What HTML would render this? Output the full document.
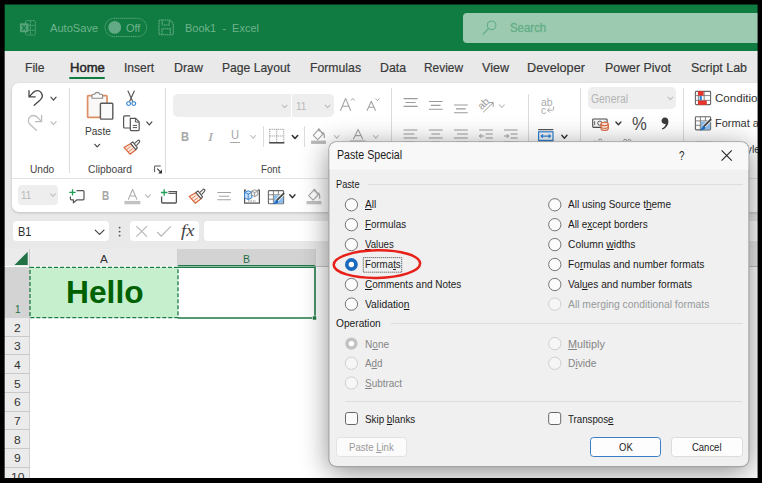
<!DOCTYPE html>
<html><head><meta charset="utf-8"><title>Excel - Paste Special</title>
<style>
html,body{margin:0;padding:0;background:#000;}
body{width:762px;height:483px;position:relative;overflow:hidden;font-family:"Liberation Sans",sans-serif;}
.r{position:absolute;box-sizing:border-box;}
.t{position:absolute;white-space:pre;transform-origin:0 50%;display:block;}
.t u{text-decoration:underline;text-decoration-thickness:1px;text-underline-offset:1px;}
svg.ov{position:absolute;left:0;top:0;}
</style></head><body>
<div class="r" style="left:4px;top:4px;width:754px;height:475px;background:#e9e9e9;"></div>
<div class="r" style="left:4px;top:4px;width:754px;height:46.5px;background:#107c41;"></div>
<div class="r" style="left:463px;top:12.5px;width:295px;height:30.0px;background:#9ccab1;border-radius:4px 0 0 4px;"></div>
<span class="t" style="left:50.30px;top:21.45px;font-size:11.75px;line-height:14.10px;color:#6fb38d;transform:scaleX(0.9460);">AutoSave</span>
<span class="t" style="left:126.00px;top:21.73px;font-size:11.28px;line-height:13.54px;color:#6fb38d;transform:scaleX(0.9717);">Off</span>
<span class="t" style="left:185.00px;top:21.45px;font-size:11.75px;line-height:14.10px;color:#6fb38d;transform:scaleX(0.9365);">Book1  -  Excel</span>
<span class="t" style="left:509.80px;top:21.47px;font-size:12.22px;line-height:14.66px;color:#64ae88;transform:scaleX(0.9351);-webkit-text-stroke:.35px #64ae88;">Search</span>
<span class="t" style="left:25.00px;top:61.17px;font-size:12.22px;line-height:14.66px;color:#3a3a3a;transform:scaleX(0.9904);-webkit-text-stroke:.2px #3a3a3a;">File</span>
<span class="t" style="left:69.50px;top:61.17px;font-size:12.22px;line-height:14.66px;color:#222;transform:scaleX(1.0708);-webkit-text-stroke:.45px #2a2a2a;">Home</span>
<span class="t" style="left:123.50px;top:61.17px;font-size:12.22px;line-height:14.66px;color:#3a3a3a;transform:scaleX(0.9850);-webkit-text-stroke:.2px #3a3a3a;">Insert</span>
<span class="t" style="left:174.00px;top:61.17px;font-size:12.22px;line-height:14.66px;color:#3a3a3a;transform:scaleX(1.0171);-webkit-text-stroke:.2px #3a3a3a;">Draw</span>
<span class="t" style="left:222.00px;top:61.17px;font-size:12.22px;line-height:14.66px;color:#3a3a3a;transform:scaleX(0.9910);-webkit-text-stroke:.2px #3a3a3a;">Page Layout</span>
<span class="t" style="left:310.00px;top:61.17px;font-size:12.22px;line-height:14.66px;color:#3a3a3a;transform:scaleX(1.0016);-webkit-text-stroke:.2px #3a3a3a;">Formulas</span>
<span class="t" style="left:380.00px;top:61.17px;font-size:12.22px;line-height:14.66px;color:#3a3a3a;transform:scaleX(1.0074);-webkit-text-stroke:.2px #3a3a3a;">Data</span>
<span class="t" style="left:424.00px;top:61.17px;font-size:12.22px;line-height:14.66px;color:#3a3a3a;transform:scaleX(0.9735);-webkit-text-stroke:.2px #3a3a3a;">Review</span>
<span class="t" style="left:482.00px;top:61.17px;font-size:12.22px;line-height:14.66px;color:#3a3a3a;transform:scaleX(1.0281);-webkit-text-stroke:.2px #3a3a3a;">View</span>
<span class="t" style="left:527.00px;top:61.17px;font-size:12.22px;line-height:14.66px;color:#3a3a3a;transform:scaleX(1.0414);-webkit-text-stroke:.2px #3a3a3a;">Developer</span>
<span class="t" style="left:605.00px;top:61.17px;font-size:12.22px;line-height:14.66px;color:#3a3a3a;transform:scaleX(1.0124);-webkit-text-stroke:.2px #3a3a3a;">Power Pivot</span>
<span class="t" style="left:691.00px;top:61.17px;font-size:12.22px;line-height:14.66px;color:#3a3a3a;transform:scaleX(1.0179);-webkit-text-stroke:.2px #3a3a3a;">Script Lab</span>
<div class="r" style="left:69px;top:76.5px;width:36px;height:2.0px;background:#107c41;border-radius:1px;"></div>
<div class="r" style="left:12px;top:83px;width:746px;height:129px;background:#ffffff;border-radius:7px 0 0 7px;box-shadow:0 1px 3px rgba(0,0,0,.18);"></div>
<div class="r" style="left:12px;top:178px;width:746px;height:1px;background:#e3e3e3;"></div>
<div class="r" style="left:68.9px;top:88px;width:1.0px;height:84.5px;background:#dcdcdc;"></div>
<div class="r" style="left:164.8px;top:88px;width:1.0px;height:84.5px;background:#dcdcdc;"></div>
<div class="r" style="left:390.5px;top:88px;width:1.0px;height:84.5px;background:#dcdcdc;"></div>
<div class="r" style="left:580.0px;top:88px;width:1.0px;height:84.5px;background:#dcdcdc;"></div>
<div class="r" style="left:683.0px;top:88px;width:1.0px;height:84.5px;background:#dcdcdc;"></div>
<div class="r" style="left:528px;top:93.5px;width:1px;height:79.0px;background:#dcdcdc;"></div>
<span class="t" style="left:30.40px;top:163.01px;font-size:10.81px;line-height:12.97px;color:#444;transform:scaleX(0.9376);">Undo</span>
<span class="t" style="left:88.00px;top:163.01px;font-size:10.81px;line-height:12.97px;color:#444;transform:scaleX(0.9521);">Clipboard</span>
<span class="t" style="left:260.50px;top:163.01px;font-size:10.81px;line-height:12.97px;color:#444;transform:scaleX(0.9026);">Font</span>
<span class="t" style="left:84.80px;top:124.15px;font-size:11.75px;line-height:14.10px;color:#3a3a3a;transform:scaleX(0.8587);">Paste</span>
<div class="r" style="left:173px;top:94px;width:118px;height:23px;background:#eeeeee;border-radius:5px 0 0 5px;"></div>
<div class="r" style="left:292px;top:94px;width:42px;height:23px;background:#eeeeee;border-radius:0 5px 5px 0;"></div>
<span class="t" style="left:295.50px;top:99.73px;font-size:11.28px;line-height:13.54px;color:#b8b8b8;transform:scaleX(0.8979);">11</span>
<span class="t" style="left:181.00px;top:128.60px;font-size:13.16px;line-height:15.79px;color:#a6a6a6;transform:scaleX(0.8420);font-weight:bold;">B</span>
<span class="t" style="left:207.50px;top:128.60px;font-size:13.16px;line-height:15.79px;color:#a6a6a6;transform:scaleX(1.1413);font-style:italic;font-family:'Liberation Serif',serif;">I</span>
<span class="t" style="left:231.00px;top:127.89px;font-size:12.69px;line-height:15.23px;color:#a6a6a6;transform:scaleX(0.8731);">U</span>
<div class="r" style="left:230.3px;top:141.7px;width:9.299999999999983px;height:1.0px;background:#a9a9a9;"></div>
<div class="r" style="left:263px;top:126px;width:1px;height:21px;background:#dcdcdc;"></div>
<div class="r" style="left:304px;top:126px;width:1px;height:21px;background:#dcdcdc;"></div>
<div class="r" style="left:588px;top:86.5px;width:87.5px;height:22.5px;background:#eeeeee;border-radius:5px;"></div>
<span class="t" style="left:591.00px;top:92.25px;font-size:12.41px;line-height:14.89px;color:#b4b4b4;transform:scaleX(0.8383);">General</span>
<span class="t" style="left:632.00px;top:113.78px;font-size:17.86px;line-height:21.43px;color:#4a4a4a;transform:scaleX(0.9320);">%</span>
<span class="t" style="left:714.60px;top:92.22px;font-size:11.47px;line-height:13.76px;color:#333;transform:scaleX(1.0107);">Conditional</span>
<span class="t" style="left:714.60px;top:117.02px;font-size:11.47px;line-height:13.76px;color:#333;transform:scaleX(0.9570);">Format as</span>
<span class="t" style="left:714.60px;top:142.62px;font-size:11.47px;line-height:13.76px;color:#333;transform:scaleX(0.9340);">Cell Styles</span>
<div class="r" style="left:18.3px;top:184.5px;width:40.2px;height:20.80000000000001px;background:#eeeeee;border-radius:4px;"></div>
<span class="t" style="left:20.80px;top:189.23px;font-size:11.28px;line-height:13.54px;color:#b8b8b8;transform:scaleX(0.8722);">11</span>
<span class="t" style="left:101.50px;top:189.17px;font-size:12.22px;line-height:14.66px;color:#a6a6a6;transform:scaleX(0.8160);font-weight:bold;">B</span>
<div class="r" style="left:13px;top:221.3px;width:96px;height:20.099999999999994px;background:#ffffff;border-radius:4px;"></div>
<div class="r" style="left:130px;top:221.3px;width:69px;height:20.099999999999994px;background:#ffffff;border-radius:4px;"></div>
<div class="r" style="left:204.2px;top:221.3px;width:553.8px;height:20.099999999999994px;background:#ffffff;border-radius:4px 0 0 4px;"></div>
<span class="t" style="left:17.60px;top:223.60px;font-size:13.16px;line-height:15.79px;color:#2a2a2a;transform:scaleX(0.8327);">B1</span>
<span class="t" style="left:181.20px;top:220.51px;font-size:15.98px;line-height:19.18px;color:#444;transform:scaleX(1.1628);font-style:italic;font-family:'Liberation Serif',serif;">fx</span>
<div class="r" style="left:4px;top:249.4px;width:754px;height:229.6px;background:#ffffff;"></div>
<div class="r" style="left:4px;top:249.4px;width:754px;height:17.099999999999994px;background:#ebebeb;"></div>
<div class="r" style="left:4px;top:266.5px;width:25.5px;height:212.5px;background:#ebebeb;"></div>
<div class="r" style="left:178px;top:249.4px;width:137px;height:17.099999999999994px;background:#d3d3d3;border-bottom:1.5px solid #1f7a47;"></div>
<div class="r" style="left:4px;top:266.5px;width:25.5px;height:51.0px;background:#d3d3d3;"></div>
<div class="r" style="left:315px;top:266.2px;width:443px;height:1.0px;background:#c2c2c2;"></div>
<div class="r" style="left:29px;top:249.4px;width:1px;height:229.6px;background:#cfcfcf;"></div>
<div class="r" style="left:177.3px;top:249.4px;width:1.0px;height:16.599999999999994px;background:#cfcfcf;"></div>
<div class="r" style="left:315px;top:249.4px;width:1px;height:16.599999999999994px;background:#cfcfcf;"></div>
<span class="t" style="left:100.40px;top:252.53px;font-size:11.28px;line-height:13.54px;color:#333;transform:scaleX(1.0380);">A</span>
<span class="t" style="left:242.50px;top:252.53px;font-size:11.28px;line-height:13.54px;color:#1f6e43;transform:scaleX(0.9316);">B</span>
<span class="t" style="left:14.50px;top:303.23px;font-size:11.28px;line-height:13.54px;color:#1f6e43;transform:scaleX(0.8778);">1</span>
<div class="r" style="left:4px;top:335.7px;width:25.5px;height:1.0px;background:#c9c9c9;"></div>
<span class="t" style="left:13.80px;top:321.53px;font-size:11.28px;line-height:13.54px;color:#333;transform:scaleX(1.0694);">2</span>
<div class="r" style="left:4px;top:354.4px;width:25.5px;height:1.0px;background:#c9c9c9;"></div>
<span class="t" style="left:13.80px;top:340.23px;font-size:11.28px;line-height:13.54px;color:#333;transform:scaleX(1.0694);">3</span>
<div class="r" style="left:4px;top:373.09999999999997px;width:25.5px;height:1.0px;background:#c9c9c9;"></div>
<span class="t" style="left:13.80px;top:358.93px;font-size:11.28px;line-height:13.54px;color:#333;transform:scaleX(1.0694);">4</span>
<div class="r" style="left:4px;top:391.79999999999995px;width:25.5px;height:1.0px;background:#c9c9c9;"></div>
<span class="t" style="left:13.80px;top:377.63px;font-size:11.28px;line-height:13.54px;color:#333;transform:scaleX(1.0694);">5</span>
<div class="r" style="left:4px;top:410.49999999999994px;width:25.5px;height:1.0px;background:#c9c9c9;"></div>
<span class="t" style="left:13.80px;top:396.33px;font-size:11.28px;line-height:13.54px;color:#333;transform:scaleX(1.0694);">6</span>
<div class="r" style="left:4px;top:429.19999999999993px;width:25.5px;height:1.0px;background:#c9c9c9;"></div>
<span class="t" style="left:13.80px;top:415.03px;font-size:11.28px;line-height:13.54px;color:#333;transform:scaleX(1.0694);">7</span>
<div class="r" style="left:4px;top:447.8999999999999px;width:25.5px;height:1.0px;background:#c9c9c9;"></div>
<span class="t" style="left:13.80px;top:433.73px;font-size:11.28px;line-height:13.54px;color:#333;transform:scaleX(1.0694);">8</span>
<div class="r" style="left:4px;top:466.5999999999999px;width:25.5px;height:1.0px;background:#c9c9c9;"></div>
<span class="t" style="left:13.80px;top:452.43px;font-size:11.28px;line-height:13.54px;color:#333;transform:scaleX(1.0694);">9</span>
<div class="r" style="left:4px;top:485.2999999999999px;width:25.5px;height:1.0px;background:#c9c9c9;"></div>
<span class="t" style="left:10.50px;top:471.13px;font-size:11.28px;line-height:13.54px;color:#333;transform:scaleX(1.0773);">10</span>
<div class="r" style="left:30px;top:267px;width:148px;height:50.5px;background:#c6efce;"></div>
<span class="t" style="left:66.30px;top:273.12px;font-size:31.96px;line-height:38.35px;color:#006100;transform:scaleX(0.9933);font-weight:bold;">Hello</span>
<span class="t" style="left:540.70px;top:96.21px;font-size:10.81px;line-height:12.97px;color:#ababab;transform:scaleX(0.9659);">ab</span>
<span class="t" style="left:540.90px;top:103.81px;font-size:10.81px;line-height:12.97px;color:#ababab;transform:scaleX(0.9447);">c</span>
<svg class="ov" width="762" height="483" viewBox="0 0 762 483" fill="none">
<path d="M14.5 265 L27.7 265 L27.7 251.7 Z" fill="#217346"/>
<rect x="30" y="267.3" width="148" height="50.3" stroke="#1f7a47" stroke-width="1.3" stroke-dasharray="4 2"/>
<path d="M178 267.3 H315 V318 H178" stroke="#1f7a47" stroke-width="1.6"/>
<rect x="312.5" y="316" width="4" height="4" fill="#1f7a47" stroke="#fff" stroke-width=".6"/>
<g stroke="#62aa85" stroke-width="1" stroke-dasharray="1 .6"><rect x="25.5" y="20.6" width="9.8" height="14.4" rx="1"/><path d="M25.5 25.4H35.3M25.5 30.2H35.3M30.4 20.6V35"/></g>
<rect x="19.9" y="23.3" width="8.6" height="9" rx="1" fill="#62aa85" opacity=".85"/><path d="M22.2 25.3L26.2 30.3M26.2 25.3L22.2 30.3" stroke="#107c41" stroke-width="1.2"/>
<rect x="105" y="18.3" width="41.6" height="18.3" rx="9.15" stroke="#62aa85" stroke-width="1" stroke-dasharray="1.2 .7"/><circle cx="114.7" cy="27.4" r="6.4" fill="#62aa85"/>
<g stroke="#62aa85" stroke-width="1.1" stroke-dasharray="1.6 .5"><path d="M159 21.5a1.5 1.5 0 0 1 1.5-1.5H169.8L173.3 23.5V33.3a1.5 1.5 0 0 1-1.5 1.5H160.5a1.5 1.5 0 0 1-1.5-1.5Z"/><path d="M162.2 20.2V25H169.2V20.2M162 34.6V28.8H170.3V34.6"/></g>
<circle cx="491.6" cy="25.3" r="4.3" stroke="#62ad87" stroke-width="1.1"/><path d="M488.5 28.5L483.3 34" stroke="#62ad87" stroke-width="1.1" stroke-linecap="round"/>
<path d="M29 90.6V96.9H35.2M29.3 96.6L33.2 92.5C35.6 90 39.6 90.1 41.3 92.8C42.8 95.1 42.3 97.9 40.2 99.9L34.2 105.3" stroke="#484848" stroke-width="1.3" stroke-linecap="round" stroke-linejoin="round"/>
<path d="M50.9 97.2L53.5 100.2L56.1 97.2" stroke="#484848" stroke-width="1.2" stroke-linecap="round" stroke-linejoin="round"/>
<path d="M41.6 115.4V121.7H35.5M41.3 121.4L37.4 117.3C35 114.8 31 114.9 29.3 117.6C27.8 119.9 28.3 122.7 30.4 124.7L36.4 130.2" stroke="#bdbdbd" stroke-width="1.3" stroke-linecap="round" stroke-linejoin="round"/>
<path d="M50.9 121.7L53.5 124.7L56.1 121.7" stroke="#bdbdbd" stroke-width="1.2" stroke-linecap="round" stroke-linejoin="round"/>
<rect x="87.6" y="95.6" width="19.4" height="21.8" rx=".7" fill="#faf8f7" stroke="#de8e64" stroke-width="1.7"/>
<path d="M92 98.2V95.3a1 1 0 0 1 1-1H94.6a2.7 2.7 0 0 1 5.2 0H101.6a1 1 0 0 1 1 1V98.2Z" fill="#fafafa" stroke="#8a8a8a" stroke-width="1.1"/>
<rect x="100.4" y="103.3" width="12.4" height="15.8" rx=".8" fill="#fafafa" stroke="#5a5a5a" stroke-width="1.4"/>
<path d="M94.8 144.29999999999998L97.2 146.9L99.60000000000001 144.29999999999998" stroke="#484848" stroke-width="1.2" stroke-linecap="round" stroke-linejoin="round"/>
<path d="M128 91L132.6 101.2M134.3 91L129.7 101.2" stroke="#555" stroke-width="1.15" stroke-linecap="round"/><circle cx="128.6" cy="103.6" r="1.9" stroke="#2f7fd1" stroke-width="1.1"/><circle cx="133.8" cy="103.6" r="1.9" stroke="#2f7fd1" stroke-width="1.1"/>
<path d="M130 128H124.6a1 1 0 0 1-1-1V116.9a1 1 0 0 1 1-1H130.2" stroke="#555" stroke-width="1.2"/><path d="M130.3 118.3H135.6L139.2 121.9V129.6a1 1 0 0 1-1 1H131.3a1 1 0 0 1-1-1Z" fill="#fff" stroke="#555" stroke-width="1.2"/><path d="M135.4 118.5V122H139M132.8 125.4H137M132.8 127.6H137" stroke="#555" stroke-width="1"/>
<path d="M146.70000000000002 121.9L149.3 124.9L151.9 121.9" stroke="#484848" stroke-width="1.2" stroke-linecap="round" stroke-linejoin="round"/>
<path d="M130.4 143.7L124 147.4L130 154.2L135.9 149.7Z" fill="#fbe9df" stroke="#d8663a" stroke-width="1.2" stroke-linejoin="round"/><path d="M126.3 149.8L130.6 146.5M128.2 152L132.8 148.6" stroke="#d8663a" stroke-width=".8"/><path d="M130.6 143.4L132.8 141.9L137.4 147.9L135.8 149.6Z" fill="#fff" stroke="#555" stroke-width="1.1" stroke-linejoin="round"/><path d="M134.4 143.6L137.6 140.6a1.2 1.2 0 0 1 1.8 1.6L136.4 145.6" stroke="#555" stroke-width="1.1"/>
<path d="M154.6 172.2V166H160.79999999999998" stroke="#555" stroke-width="1"/><path d="M157.2 168.6L161.4 172.8" stroke="#333" stroke-width="1.1"/><path d="M162.0 169.6V173.4H158.2Z" fill="#333"/>
<path d="M282.3 105.10000000000001L284.7 107.7L287.09999999999997 105.10000000000001" stroke="#bdbdbd" stroke-width="1.1" stroke-linecap="round" stroke-linejoin="round"/>
<path d="M325.20000000000005 105.10000000000001L327.6 107.7L330.0 105.10000000000001" stroke="#bdbdbd" stroke-width="1.1" stroke-linecap="round" stroke-linejoin="round"/>
<path d="M250.79999999999998 135.5L253.2 138.10000000000002L255.6 135.5" stroke="#bdbdbd" stroke-width="1.1" stroke-linecap="round" stroke-linejoin="round"/>
<g stroke="#8c8c8c" stroke-width="1" stroke-dasharray="1 1"><path d="M269.7 129.3H283.8M269.7 129.3V142.5M283.8 129.3V142.5M276.7 129.3V142.5M269.7 136H283.8"/></g><path d="M269.2 142.8H284.3" stroke="#444" stroke-width="1.5"/>
<path d="M292.3 135.5L295 138.5L297.7 135.5" stroke="#333" stroke-width="1.6" stroke-linecap="round" stroke-linejoin="round"/>
<path d="M313.3 135.3L318.9 129.20000000000002L323.0 134.10000000000002L317.7 139.70000000000002Z" stroke="#a3a3a3" stroke-width="1.15" stroke-linejoin="round"/><path d="M318.8 129.3L320.2 131.0" stroke="#a3a3a3" stroke-width="1.9" stroke-linecap="round"/><path d="M321.8 133.10000000000002C323.59999999999997 131.4 324.5 134.4 324.3 137.60000000000002" stroke="#a3a3a3" stroke-width="1.3" stroke-linecap="round"/><rect x="311.09999999999997" y="140.60000000000002" width="14.9" height="3.3" fill="#b9b9b9"/>
<path d="M334.3 135.5L336.7 138.10000000000002L339.09999999999997 135.5" stroke="#bdbdbd" stroke-width="1.1" stroke-linecap="round" stroke-linejoin="round"/>
<path d="M353.4 139.2L358.1 129.4L362.8 139.2M355.28 135.672H360.92" stroke="#a6a6a6" stroke-width="1.1" stroke-linejoin="round"/>
<rect x="350" y="140.4" width="15.600000000000023" height="3.0999999999999943" fill="#b9b9b9"/>
<path d="M373.40000000000003 135.5L375.8 138.10000000000002L378.2 135.5" stroke="#bdbdbd" stroke-width="1.1" stroke-linecap="round" stroke-linejoin="round"/>
<path d="M340.4 110.8L345.6 98.4L350.8 110.8M342.47999999999996 106.336H348.72" stroke="#a0a0a0" stroke-width="1.05" stroke-linejoin="round"/>
<path d="M351.2 100.2L352.8 98.5L354.4 100.2" stroke="#a0a0a0" stroke-width="1" stroke-linecap="round"/>
<path d="M367 110.8L371.3 101.2L375.6 110.8M368.72 107.344H373.88" stroke="#a0a0a0" stroke-width="1.05" stroke-linejoin="round"/>
<path d="M375.6 98.8L377.4 100.6L379.2 98.8" stroke="#a0a0a0" stroke-width="1" stroke-linecap="round"/>
<path d="M403.6 98.6H417.6M405.6 102.5H415.6M403.6 106.4H417.6" stroke="#9b9b9b" stroke-width="1.1"/>
<path d="M428.9 101.5H442.6M430.9 105.4H440.6M428.9 109.3H442.6" stroke="#9b9b9b" stroke-width="1.1"/>
<path d="M454 105H467.8M456 108.9H465.8M454 112.8H467.8" stroke="#9b9b9b" stroke-width="1.1"/>
<path d="M403.6 130H417.4M403.6 134H414.4M403.6 138H417.4M403.6 141.9H414.4" stroke="#9b9b9b" stroke-width="1.1"/>
<path d="M428.9 130H442.6M431.4 134H440.1M428.9 138H442.6M431.4 141.9H440.1" stroke="#9b9b9b" stroke-width="1.1"/>
<path d="M454 130H467.8M457 134H467.8M454 138H467.8M457 141.9H467.8" stroke="#9b9b9b" stroke-width="1.1"/>
<path d="M479.2 130H492.8M485.7 134H492.8M485.7 138H492.8M479.2 141.9H492.8" stroke="#9b9b9b" stroke-width="1.1"/>
<path d="M479.4 136H484.2M481.4 134L479.4 136L481.4 138" stroke="#9b9b9b" stroke-width="1"/>
<path d="M504 130H517.6M510.5 134H517.6M510.5 138H517.6M504 141.9H517.6" stroke="#9b9b9b" stroke-width="1.1"/>
<path d="M504 136H508.8M506.8 134L508.8 136L506.8 138" stroke="#9b9b9b" stroke-width="1"/>
<path d="M483.4 112L493 102.8M489.4 102.6H493.2V106.4" stroke="#9b9b9b" stroke-width="1" stroke-linecap="round"/><text x="483" y="103.4" text-anchor="middle" dominant-baseline="central" font-family="Liberation Sans, sans-serif" font-size="10.5" fill="#9b9b9b" transform="rotate(-45 483 103.4)">ab</text>
<path d="M499.5 104.9L501.9 107.5L504.29999999999995 104.9" stroke="#bdbdbd" stroke-width="1.1" stroke-linecap="round" stroke-linejoin="round"/>
<path d="M553.6 106.6V109.2a1 1 0 0 1-1 1H547.6M549.8 107.8L547.4 110.2L549.8 112.6" stroke="#ababab" stroke-width="1"/>
<path d="M538.2 129.6H553.3M538.2 141.4H553.3" stroke="#555" stroke-width="1.1"/><rect x="538.6" y="131.8" width="14.4" height="8.6" fill="#f1f6fc" stroke="#2f7fd1" stroke-width="1.2"/><path d="M541 136.1H550.6M543 134.3L541 136.1L543 137.9M548.6 134.3L550.6 136.1L548.6 137.9" stroke="#2f7fd1" stroke-width="1.1"/>
<path d="M561.8 135.3L564.4 138.3L567.0 135.3" stroke="#333" stroke-width="1.4" stroke-linecap="round" stroke-linejoin="round"/>
<path d="M668.0 97.10000000000001L670.4 99.7L672.8 97.10000000000001" stroke="#bdbdbd" stroke-width="1.1" stroke-linecap="round" stroke-linejoin="round"/>
<rect x="592.7" y="119" width="14.4" height="8.4" rx=".8" fill="#f4f4f4" stroke="#4d4d4d" stroke-width="1.1"/><circle cx="599.8" cy="123.2" r="2.1" stroke="#4d4d4d" stroke-width=".9"/><path d="M594.6 121.2V125.2M605 121.2V122" stroke="#4d4d4d" stroke-width=".8"/>
<path d="M601 124.2V128.6C601 131.2 608.3 131.2 608.3 128.6V124.2" fill="#fbe3d6" stroke="#d8663a" stroke-width="1.1"/><ellipse cx="604.65" cy="124" rx="3.65" ry="1.7" fill="#fbe3d6" stroke="#d8663a" stroke-width="1.1"/><path d="M601 126.6C601 129 608.3 129 608.3 126.6" stroke="#d8663a" stroke-width="1"/>
<path d="M615.9 122.0L618.4 124.80000000000001L620.9 122.0" stroke="#333" stroke-width="1.3" stroke-linecap="round" stroke-linejoin="round"/>
<path d="M664.9 117.6a3.2 3.2 0 1 0 .9 6.2C665.6 126 664 127.6 661.8 128.6L662.4 129.4C666.2 128 668.4 125 668.4 121.4C668.4 119 666.9 117.6 664.9 117.6Z" fill="#3a3a3a"/>
<path d="M594.6 141.2h1.2M598.6 140.6a1.6 1.6 0 0 1 3.2 0M623.6 140.8a1.5 1.5 0 0 1 3 0M627.8 140.8a1.5 1.5 0 0 1 3 0" stroke="#9a9a9a" stroke-width="1"/>
<rect x="695.4" y="91.4" width="15.2" height="13.2" rx=".8" fill="#fff" stroke="#666" stroke-width="1.1"/><path d="M695.4 95.6H710.6M695.4 100.4H710.6M698.4 91.4V104.6M704.2 91.4V104.6" stroke="#777" stroke-width=".9"/><rect x="698" y="91.2" width="5.6" height="4.4" fill="#e6342a"/><rect x="698" y="100.6" width="8.8" height="4.2" fill="#e6342a"/><rect x="699.6" y="96" width="2.2" height="4.2" fill="#2f7fd1"/>
<rect x="695.4" y="116.7" width="15.2" height="13.2" rx=".8" fill="#fff" stroke="#666" stroke-width="1.1"/><path d="M695.4 120.89999999999999H710.6M695.4 125.3H700.6M700.4 116.7V129.9M705.4 116.7V120.89999999999999" stroke="#777" stroke-width=".9"/><path d="M701 121.5H710.2V129.5H701Z" fill="#8bbcec"/><path d="M710.4 119.89999999999999L703.6 126.7" stroke="#fff" stroke-width="3.4"/><path d="M710.6 119.7L703.8 126.5" stroke="#4a4a4a" stroke-width="1.9" stroke-linecap="round"/><path d="M704.2 126.1C702.6 126.3 702.2 128.7 699.8 129.9C703 130.7 705.6 129.3 705.4 127.3Z" fill="#1f6fc4"/>
<path d="M695.4 142H710.8" stroke="#8a8a8a" stroke-width="1.2"/>
<path d="M50.6 193.89999999999998L53 196.5L55.4 193.89999999999998" stroke="#bdbdbd" stroke-width="1.1" stroke-linecap="round" stroke-linejoin="round"/>
<path d="M76.6 190.6H83a1 1 0 0 1 1 1V198.8a1 1 0 0 1-1 1H77L73.4 202.8V199.8H71.4a1 1 0 0 1-1-1V196.4" stroke="#555" stroke-width="1.2" stroke-linejoin="round"/><path d="M72.5 189.2V195.6M69.3 192.4H75.7" stroke="#1e9e57" stroke-width="1.3"/>
<path d="M128.2 199.6L132.6 189.4L137 199.6M129.95999999999998 195.928H135.24" stroke="#a9a9a9" stroke-width="1.1" stroke-linejoin="round"/>
<rect x="124.4" y="200.9" width="15.900000000000006" height="3.4000000000000057" fill="#c2c2c2"/>
<path d="M145.5 194.7L147.9 197.3L150.3 194.7" stroke="#bdbdbd" stroke-width="1.1" stroke-linecap="round" stroke-linejoin="round"/>
<path d="M161.6 196.6V202a1 1 0 0 0 1 1H175.4a1 1 0 0 0 1-1V191.6H168.4" stroke="#555" stroke-width="1.3"/><path d="M168.4 193.4H176.2" stroke="#555" stroke-width="1"/><path d="M164.2 189.2V195.8M160.9 192.5H167.5" stroke="#1e9e57" stroke-width="1.3"/>
<g transform="translate(65.2 49)"><path d="M130.4 143.7L124 147.4L130 154.2L135.9 149.7Z" fill="#fbe9df" stroke="#d8663a" stroke-width="1.2" stroke-linejoin="round"/><path d="M126.3 149.8L130.6 146.5M128.2 152L132.8 148.6" stroke="#d8663a" stroke-width=".8"/><path d="M130.6 143.4L132.8 141.9L137.4 147.9L135.8 149.6Z" fill="#fff" stroke="#555" stroke-width="1.1" stroke-linejoin="round"/><path d="M134.4 143.6L137.6 140.6a1.2 1.2 0 0 1 1.8 1.6L136.4 145.6" stroke="#555" stroke-width="1.1"/></g>
<path d="M217.3 192.5H231M219.10000000000002 196.2H229.2M217.3 199.8H231" stroke="#a3a3a3" stroke-width="1.1"/>
<path d="M246 190.2H244.6V203.2H259.4V190.2H257.6" stroke="#555" stroke-width="1.2"/><path d="M248 201H256" stroke="#777" stroke-width=".9" stroke-dasharray="1.5 1"/><path d="M244.6 192.4L248.2 190.8L251.8 192.4V197.8L248.2 199.6L244.6 197.8Z" fill="#cfe3f7" stroke="#2f7fd1" stroke-width="1"/><path d="M244.6 192.4L248.2 194L251.8 192.4M248.2 194V199.6" stroke="#2f7fd1" stroke-width=".9"/><path d="M251.6 191.2L254.6 189.8L257.8 191.2V195L254.6 196.6L251.6 195Z" fill="#f2f2f2" stroke="#8a8a8a" stroke-width=".9"/><path d="M251.6 191.2L254.6 192.6L257.8 191.2M254.6 192.6V196.6" stroke="#8a8a8a" stroke-width=".8"/>
<rect x="268.4" y="190.6" width="15.2" height="13.2" rx=".8" fill="#fff" stroke="#666" stroke-width="1.1"/><path d="M268.4 194.79999999999998H283.6M268.4 199.2H273.6M273.4 190.6V203.79999999999998M278.4 190.6V194.79999999999998" stroke="#777" stroke-width=".9"/><path d="M274 195.39999999999998H283.2V203.39999999999998H274Z" fill="#8bbcec"/><path d="M283.4 193.79999999999998L276.6 200.6" stroke="#fff" stroke-width="3.4"/><path d="M283.6 193.6L276.8 200.39999999999998" stroke="#4a4a4a" stroke-width="1.9" stroke-linecap="round"/><path d="M277.2 200.0C275.6 200.2 275.2 202.6 272.8 203.79999999999998C276 204.6 278.6 203.2 278.4 201.2Z" fill="#1f6fc4"/>
<path d="M289.79999999999995 194.7L292.4 197.7L295.0 194.7" stroke="#333" stroke-width="1.4" stroke-linecap="round" stroke-linejoin="round"/>
<path d="M308.70000000000005 195.7L314.3 189.6L318.40000000000003 194.5L313.1 200.1Z" stroke="#a9a9a9" stroke-width="1.15" stroke-linejoin="round"/><path d="M314.20000000000005 189.7L315.6 191.39999999999998" stroke="#a9a9a9" stroke-width="1.9" stroke-linecap="round"/><path d="M317.20000000000005 193.5C319.0 191.79999999999998 319.90000000000003 194.79999999999998 319.70000000000005 198.0" stroke="#a9a9a9" stroke-width="1.3" stroke-linecap="round"/><rect x="306.5" y="201.0" width="14.9" height="3.3" fill="#c2c2c2"/>
<path d="M95.19999999999999 230.20000000000002L99.6 234.4L104.0 230.20000000000002" stroke="#3a3a3a" stroke-width="1.1" stroke-linecap="round" stroke-linejoin="round"/>
<circle cx="119.6" cy="227.6" r=".95" fill="#555"/><circle cx="119.6" cy="231.6" r=".95" fill="#555"/><circle cx="119.6" cy="235.6" r=".95" fill="#555"/>
<path d="M136.4 226.2L147 236.6M147 226.2L136.4 236.6" stroke="#b4b4b4" stroke-width="1.1"/><path d="M157.2 232L161.2 236.2L170.8 226.4" stroke="#b4b4b4" stroke-width="1.1"/>
</svg>
<div class="r" style="left:329px;top:142px;width:420px;height:324.5px;background:#f0f0f0;border-radius:8px;box-shadow:0 5px 28px rgba(0,0,0,.46);"></div>
<svg class="ov" width="762" height="483" viewBox="0 0 762 483" fill="none">
<rect x="328.9" y="141.7" width="420" height="324.9" rx="7.6" fill="#f0f0f0" stroke="#a4a4a4" stroke-width="1.15"/>
<path d="M329.5 169.5V149.3a7 7 0 0 1 7-7H741.3a7 7 0 0 1 7 7V169.5Z" fill="#f8f8f8"/>
</svg>
<span class="t" style="left:337.30px;top:148.10px;font-size:12.5px;line-height:15.00px;color:#1b1b1b;transform:scaleX(0.8517);">Paste Special</span>
<span class="t" style="left:679.20px;top:147.90px;font-size:13.16px;line-height:15.79px;color:#1b1b1b;transform:scaleX(0.7380);">?</span>
<span class="t" style="left:336.00px;top:178.01px;font-size:10.81px;line-height:12.97px;color:#1b1b1b;transform:scaleX(0.8512);">Paste</span>
<div class="r" style="left:368px;top:183.7px;width:374.5px;height:1.0px;background:#dddddd;"></div>
<span class="t" style="left:335.90px;top:317.11px;font-size:10.81px;line-height:12.97px;color:#1b1b1b;transform:scaleX(0.9427);">Operation</span>
<div class="r" style="left:391px;top:322.8px;width:351.5px;height:1.0px;background:#dddddd;"></div>
<div class="r" style="left:344.6px;top:400.8px;width:397.9px;height:1.0px;background:#dddddd;"></div>
<span class="t" style="left:364.80px;top:198.41px;font-size:10.81px;line-height:12.97px;color:#1b1b1b;transform:scaleX(0.9334);"><u>A</u>ll</span>
<span class="t" style="left:364.80px;top:218.31px;font-size:10.81px;line-height:12.97px;color:#1b1b1b;transform:scaleX(0.9134);"><u>F</u>ormulas</span>
<span class="t" style="left:364.80px;top:238.21px;font-size:10.81px;line-height:12.97px;color:#1b1b1b;transform:scaleX(0.8941);"><u>V</u>alues</span>
<span class="t" style="left:364.80px;top:258.11px;font-size:10.81px;line-height:12.97px;color:#1b1b1b;transform:scaleX(0.9017);">Forma<u>t</u>s</span>
<span class="t" style="left:364.80px;top:278.11px;font-size:10.81px;line-height:12.97px;color:#1b1b1b;transform:scaleX(0.9213);"><u>C</u>omments and Notes</span>
<span class="t" style="left:364.80px;top:297.71px;font-size:10.81px;line-height:12.97px;color:#1b1b1b;transform:scaleX(0.9545);">Validatio<u>n</u></span>
<span class="t" style="left:567.90px;top:198.41px;font-size:10.81px;line-height:12.97px;color:#1b1b1b;transform:scaleX(0.9277);">All using Source t<u>h</u>eme</span>
<span class="t" style="left:567.90px;top:218.31px;font-size:10.81px;line-height:12.97px;color:#1b1b1b;transform:scaleX(0.9211);">All e<u>x</u>cept borders</span>
<span class="t" style="left:567.90px;top:238.21px;font-size:10.81px;line-height:12.97px;color:#1b1b1b;transform:scaleX(0.9519);">Column <u>w</u>idths</span>
<span class="t" style="left:567.90px;top:258.11px;font-size:10.81px;line-height:12.97px;color:#1b1b1b;transform:scaleX(0.9425);">Fo<u>r</u>mulas and number formats</span>
<span class="t" style="left:567.90px;top:278.11px;font-size:10.81px;line-height:12.97px;color:#1b1b1b;transform:scaleX(0.9414);">Val<u>u</u>es and number formats</span>
<span class="t" style="left:567.90px;top:297.71px;font-size:10.81px;line-height:12.97px;color:#969a9c;transform:scaleX(0.9572);">All merging conditional formats</span>
<span class="t" style="left:364.50px;top:337.61px;font-size:10.81px;line-height:12.97px;color:#858585;transform:scaleX(0.9337);">N<u>o</u>ne</span>
<span class="t" style="left:364.50px;top:357.31px;font-size:10.81px;line-height:12.97px;color:#858585;transform:scaleX(0.9110);">A<u>d</u>d</span>
<span class="t" style="left:364.50px;top:377.01px;font-size:10.81px;line-height:12.97px;color:#858585;transform:scaleX(0.9202);"><u>S</u>ubtract</span>
<span class="t" style="left:567.90px;top:337.61px;font-size:10.81px;line-height:12.97px;color:#858585;transform:scaleX(1.0055);"><u>M</u>ultiply</span>
<span class="t" style="left:567.90px;top:357.31px;font-size:10.81px;line-height:12.97px;color:#858585;transform:scaleX(0.9466);">D<u>i</u>vide</span>
<span class="t" style="left:364.50px;top:413.41px;font-size:10.81px;line-height:12.97px;color:#1b1b1b;transform:scaleX(0.9092);">Skip <u>b</u>lanks</span>
<span class="t" style="left:567.90px;top:413.41px;font-size:10.81px;line-height:12.97px;color:#1b1b1b;transform:scaleX(0.8990);">Transpos<u>e</u></span>
<div class="r" style="left:336.3px;top:436.8px;width:70.89999999999998px;height:20.69999999999999px;background:#fbfbfb;border:1px solid #e2e2e2;border-radius:3.5px;"></div>
<div class="r" style="left:590px;top:436.8px;width:70.79999999999995px;height:20.69999999999999px;background:#fdfdfd;border:1px solid #3a7dc6;border-radius:3.5px;"></div>
<div class="r" style="left:671.4px;top:436.8px;width:71.30000000000007px;height:20.69999999999999px;background:#fdfdfd;border:1px solid #dcdcdc;border-radius:3.5px;"></div>
<span class="t" style="left:349.20px;top:441.41px;font-size:10.81px;line-height:12.97px;color:#9a9a9a;transform:scaleX(0.8866);">Paste <u>L</u>ink</span>
<span class="t" style="left:618.70px;top:441.41px;font-size:10.81px;line-height:12.97px;color:#1b1b1b;transform:scaleX(0.8782);">OK</span>
<span class="t" style="left:691.90px;top:441.41px;font-size:10.81px;line-height:12.97px;color:#1b1b1b;transform:scaleX(0.8778);">Cancel</span>
<svg class="ov" width="762" height="483" viewBox="0 0 762 483" fill="none">
<path d="M721.6 150.4 L731.8 160.6 M731.8 150.4 L721.6 160.6" stroke="#222" stroke-width="1.1"/>
<circle cx="351.4" cy="204.8" r="6.15" fill="#fbfbfb" stroke="#747474" stroke-width="1"/>
<circle cx="351.4" cy="224.7" r="6.15" fill="#fbfbfb" stroke="#747474" stroke-width="1"/>
<circle cx="351.4" cy="244.6" r="6.15" fill="#fbfbfb" stroke="#747474" stroke-width="1"/>
<circle cx="351.4" cy="264.5" r="6.4" fill="#1a6bc0"/><circle cx="351.4" cy="264.5" r="2.7" fill="#fff"/>
<circle cx="351.4" cy="284.5" r="6.15" fill="#fbfbfb" stroke="#747474" stroke-width="1"/>
<circle cx="351.4" cy="304.1" r="6.15" fill="#fbfbfb" stroke="#747474" stroke-width="1"/>
<circle cx="554.8" cy="204.8" r="6.15" fill="#fbfbfb" stroke="#747474" stroke-width="1"/>
<circle cx="554.8" cy="224.7" r="6.15" fill="#fbfbfb" stroke="#747474" stroke-width="1"/>
<circle cx="554.8" cy="244.6" r="6.15" fill="#fbfbfb" stroke="#747474" stroke-width="1"/>
<circle cx="554.8" cy="264.5" r="6.15" fill="#fbfbfb" stroke="#747474" stroke-width="1"/>
<circle cx="554.8" cy="284.5" r="6.15" fill="#fbfbfb" stroke="#747474" stroke-width="1"/>
<circle cx="554.8" cy="304.1" r="6.15" fill="#f6f6f6" stroke="#cfcfcf" stroke-width="1"/>
<rect x="363.3" y="257.6" width="38.4" height="14.6" stroke="#444" stroke-width="1" stroke-dasharray="1 1"/>
<ellipse cx="376.9" cy="264.1" rx="43.2" ry="13.8" stroke="#e8201a" stroke-width="2.5" transform="rotate(-1 376.9 264.1)"/>
<circle cx="351.4" cy="343.6" r="6.2" fill="#c3c3c3"/><circle cx="351.4" cy="343.6" r="2.7" fill="#fff"/>
<circle cx="351.4" cy="363.3" r="6.15" fill="#f6f6f6" stroke="#cfcfcf" stroke-width="1"/>
<circle cx="351.4" cy="383" r="6.15" fill="#f6f6f6" stroke="#cfcfcf" stroke-width="1"/>
<circle cx="554.8" cy="343.6" r="6.15" fill="#f6f6f6" stroke="#cfcfcf" stroke-width="1"/>
<circle cx="554.8" cy="363.3" r="6.15" fill="#f6f6f6" stroke="#cfcfcf" stroke-width="1"/>
<rect x="345.5" y="412.5" width="12" height="12" rx="2.2" fill="#fbfbfb" stroke="#676767" stroke-width="1"/>
<rect x="548.7" y="412.5" width="12" height="12" rx="2.2" fill="#fbfbfb" stroke="#676767" stroke-width="1"/>
</svg>
<svg class="ov" width="762" height="483" viewBox="0 0 762 483" fill="none">
<path fill-rule="evenodd" fill="#000" d="M0 0H762V483H0Z M4.65 4.4V478.1H757.6V4.4Z"/>
</svg>
</body></html>
